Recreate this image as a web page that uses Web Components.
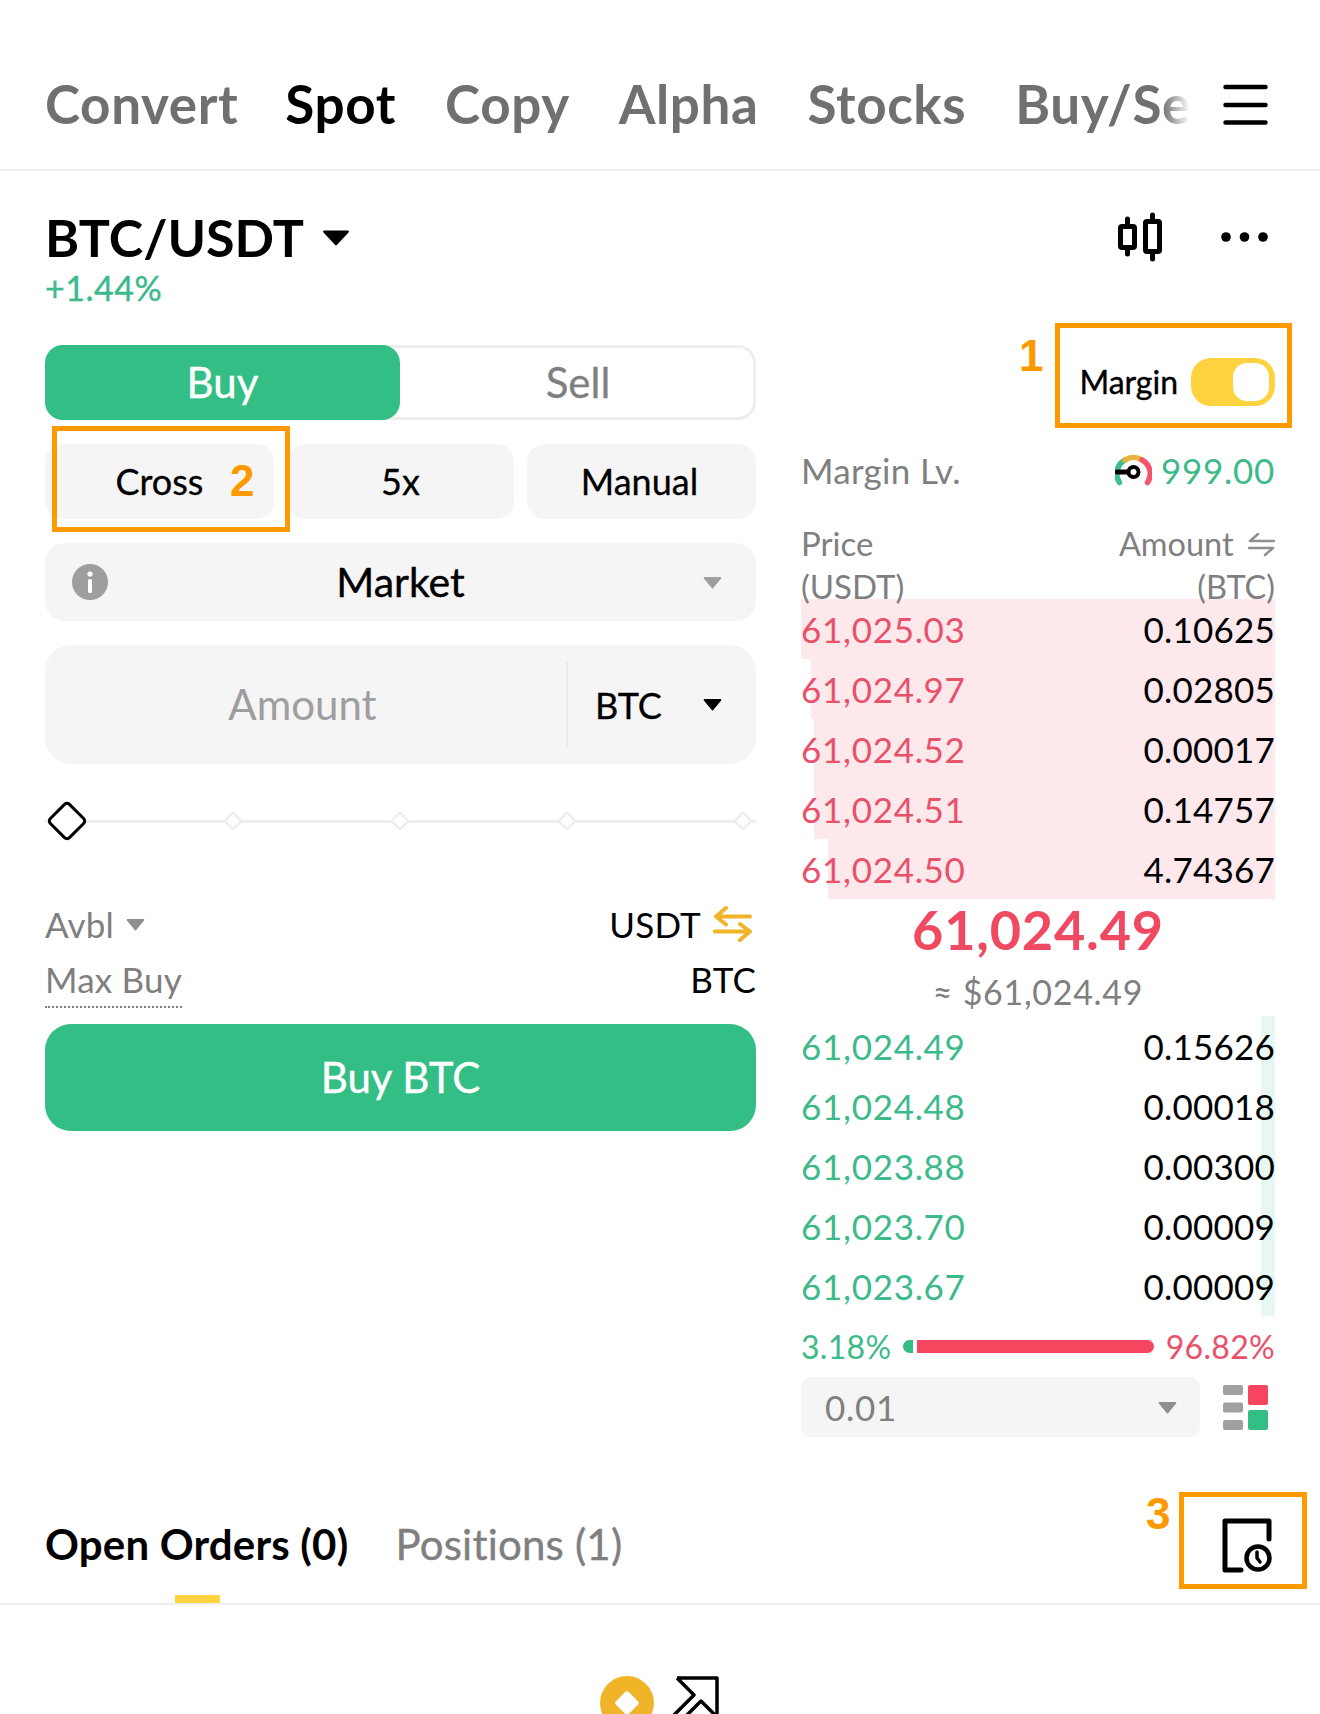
<!DOCTYPE html>
<html>
<head>
<meta charset="utf-8">
<title>Spot</title>
<style>
    html, body {
        margin: 0;
        background: #fff;
    }
    body {
        width: 1320px;
        height: 1714px;
        overflow: hidden;
        position: relative;
        font-family: Lato, "Noto Sans", sans-serif;
        color: #000;
    }
</style>
</head>
<body>
<top-tabs>
    <tab-link style="margin-right:-2px">Convert</tab-link>
    <tab-link active>Spot</tab-link>
    <tab-link>Copy</tab-link>
    <tab-link>Alpha</tab-link>
    <tab-link>Stocks</tab-link>
    <tab-link>Buy/Sell</tab-link>
</top-tabs>
<pair-header></pair-header>
<trade-panel>
    <order-form slot="left"></order-form>
    <order-book slot="right"></order-book>
</trade-panel>
<order-tabs></order-tabs>
<promo-icons></promo-icons>

<note-box num="1" style="left:1055px;top:323px;width:237px;height:105px" numx="-41" numy="3"></note-box>
<note-box num="2" style="left:52px;top:426px;width:238px;height:106px" numx="173" numy="25"></note-box>
<note-box num="3" style="left:1179px;top:1492px;width:128px;height:97px" numx="-38" numy="-8"></note-box>

<script>
// shared caret used in a few places
const caret = (color, w, h) => `<svg width="${w}" height="${h}" viewBox="0 0 20 12" preserveAspectRatio="none"><path d="M1.5 1h17a.8.8 0 0 1 .6 1.3l-8.5 9a.8.8 0 0 1-1.2 0l-8.5-9A.8.8 0 0 1 1.5 1z" fill="${color}"/></svg>`;

// TOP TABS
const topTabsTemplate = document.createElement('template');
topTabsTemplate.innerHTML = `
    <style>
        :host {
            display: flex;
            align-items: center;
            box-sizing: border-box;
            height: 171px;
            padding: 39px 52px 0 45px;
            border-bottom: 2px solid #eeeeee;
        }
        .scroll {
            flex: 1;
            display: flex;
            gap: 49px;
            overflow: hidden;
            white-space: nowrap;
            -webkit-mask-image: linear-gradient(to right, #000 1118px, transparent 1145px);
            mask-image: linear-gradient(to right, #000 1118px, transparent 1145px);
        }
        svg { flex: none; margin: 2px 0 0 33px; display: block; }
    </style>
    <div class="scroll"><slot></slot></div>
    <svg width="45" height="44" viewBox="0 0 45 44"><path d="M2.500 4h40M2.500 22h40M2.500 39.500h40" stroke="#000" stroke-width="4.500" stroke-linecap="round"/></svg>
`;
class TopTabs extends HTMLElement {
    constructor() {
        super();
        this.attachShadow({ mode: 'open' }).appendChild(topTabsTemplate.content.cloneNode(true));
    }
}
customElements.define('top-tabs', TopTabs);

const tabLinkTemplate = document.createElement('template');
tabLinkTemplate.innerHTML = `
    <style>
        :host {
            display: block;
            flex: none;
            font-size: 53px;
            letter-spacing: 0.6px;
            line-height: 62px;
            font-weight: 700;
            color: #707070;
        }
        :host([active]) { color: #000; }
    </style>
    <slot></slot>
`;
class TabLink extends HTMLElement {
    constructor() {
        super();
        this.attachShadow({ mode: 'open' }).appendChild(tabLinkTemplate.content.cloneNode(true));
    }
}
customElements.define('tab-link', TabLink);

// PAIR HEADER
const pairHeaderTemplate = document.createElement('template');
pairHeaderTemplate.innerHTML = `
    <style>
        :host {
            display: flex;
            justify-content: space-between;
            height: 174px;
            padding: 0 52px 0 45px;
            box-sizing: border-box;
        }
        .name { display: flex; align-items: center; gap: 18px; height: 60px; margin-top: 36px;
            font-size: 52px; font-weight: 700; line-height: 60px; }
        .chg { font-size: 34px; letter-spacing: 0.5px; line-height: 40px; color: #3dba8a; margin-top: 1px; -webkit-text-stroke: 0.4px #3dba8a; }
        .icons { display: flex; align-items: center; gap: 58px; height: 60px; margin-top: 36px; }
        svg { display: block; }
    </style>
    <div>
        <div class="name"><span>BTC/USDT</span>${caret('#000', 28, 17)}</div>
        <div class="chg">+1.44%</div>
    </div>
    <div class="icons">
        <svg width="46" height="50" viewBox="0 0 46 50" fill="none" stroke="#000" stroke-width="5" stroke-linecap="round" stroke-linejoin="round">
            <rect x="3.500" y="14.500" width="14" height="21" rx="1.500"/>
            <path d="M10.500 7v7.500M10.500 35.500V42"/>
            <rect x="28.500" y="9.500" width="14" height="30" rx="1.500"/>
            <path d="M35.500 3v6.500M35.500 39.500V47"/>
        </svg>
        <svg width="47" height="10" viewBox="0 0 47 10" fill="#000"><circle cx="5" cy="5" r="4.800"/><circle cx="23.500" cy="5" r="4.800"/><circle cx="42" cy="5" r="4.800"/></svg>
    </div>
`;
class PairHeader extends HTMLElement {
    constructor() {
        super();
        this.attachShadow({ mode: 'open' }).appendChild(pairHeaderTemplate.content.cloneNode(true));
    }
}
customElements.define('pair-header', PairHeader);

// MAIN TWO COLUMNS
const tradePanelTemplate = document.createElement('template');
tradePanelTemplate.innerHTML = `
    <style>
        :host {
            display: grid;
            grid-template-columns: 711px 474px;
            column-gap: 45px;
            padding-left: 45px;
            height: 1139px;
        }
    </style>
    <slot name="left"></slot>
    <slot name="right"></slot>
`;
class TradePanel extends HTMLElement {
    constructor() {
        super();
        this.attachShadow({ mode: 'open' }).appendChild(tradePanelTemplate.content.cloneNode(true));
    }
}
customElements.define('trade-panel', TradePanel);

// ORDER FORM
const orderFormTemplate = document.createElement('template');
orderFormTemplate.innerHTML = `
    <style>
        :host { display: flex; flex-direction: column; }
        .side {
            display: grid;
            grid-template-columns: 355px 1fr;
            height: 75px;
            border-radius: 18px;
            box-shadow: inset 0 0 0 3px #eeeeee;
            font-size: 42px;
            line-height: 75px;
            text-align: center;
            color: #7f7f7f;
        }
        .side b { font-weight: 400; background: #32be85; color: #fff; border-radius: 18px; -webkit-text-stroke: 0.4px #fff; }
        .side span { -webkit-text-stroke: 0.3px #7f7f7f; }
        .pills {
            display: grid;
            grid-template-columns: 229px 227px 229px;
            column-gap: 13px;
            margin-top: 24px;
        }
        .pill {
            height: 75px;
            line-height: 75px;
            background: #f5f5f5;
            border-radius: 18px;
            text-align: center;
            font-size: 36px;
            -webkit-text-stroke: 0.3px #000;
        }
        .pill:last-child { box-sizing: border-box; padding-right: 4px; }
        .market {
            position: relative;
            display: flex;
            align-items: center;
            justify-content: center;
            height: 78px;
            margin-top: 24px;
            background: #f5f5f5;
            border-radius: 20px;
            font-size: 41px;
            line-height: 76px;
            -webkit-text-stroke: 0.4px #000;
        }
        .market .info { position: absolute; left: 27px; top: 21px; }
        .market .arrow { position: absolute; right: 34px; top: 33px; display: flex; }
        .amount {
            display: flex;
            height: 119px;
            margin-top: 24px;
            background: #f5f5f5;
            border-radius: 26px;
            align-items: center;
        }
        .amount .ph {
            box-sizing: border-box;
            width: 523px;
            height: 85px;
            padding-right: 6px;
            line-height: 85px;
            text-align: center;
            border-right: 2px solid #ebebeb;
            font-size: 42px;
            color: #9e9e9e;
        }
        .amount .unit {
            flex: 1;
            display: flex;
            align-items: center;
            justify-content: space-between;
            padding: 0 34px 0 27px;
            font-size: 36px;
            -webkit-text-stroke: 0.3px #000;
        }
        .slider {
            display: flex;
            align-items: center;
            height: 40px;
            margin-top: 37px;
            background: linear-gradient(#eeeeee, #eeeeee) center / 100% 3px no-repeat;
        }
        .slider svg { display: block; flex: none; }
        .line {
            display: flex;
            justify-content: space-between;
            align-items: center;
            font-size: 35px;
            letter-spacing: 0.2px;
            color: #000;
        }
        .line .lab { color: #7f7f7f; display: flex; align-items: center; gap: 12px; }
        .line .val { display: flex; align-items: center; gap: 12px; }
        .line .val svg { margin-right: 3px; }
        .avbl { margin-top: 63px; height: 40px; }
        .maxbuy { margin-top: 15px; height: 40px; }
        .maxbuy .lab { border-bottom: 2px dotted #7f7f7f; padding-bottom: 6px; margin-top: 8px; }
        .buy {
            height: 107px;
            line-height: 107px;
            margin-top: 25px;
            background: #32be85;
            border-radius: 26px;
            text-align: center;
            color: #fff;
            font-size: 42px;
            -webkit-text-stroke: 0.4px #fff;
        }
    </style>
    <div class="side"><b>Buy</b><span>Sell</span></div>
    <div class="pills">
        <div class="pill">Cross</div>
        <div class="pill">5x</div>
        <div class="pill">Manual</div>
    </div>
    <div class="market">
        <svg class="info" width="36" height="36" viewBox="0 0 36 36"><circle cx="18" cy="18" r="18" fill="#9e9e9e"/><rect x="16" y="15" width="4" height="14" rx="1.500" fill="#fff"/><circle cx="18" cy="10" r="2.600" fill="#fff"/></svg>
        <span>Market</span>
        <span class="arrow">${caret('#9e9e9e', 19, 13)}</span>
    </div>
    <div class="amount">
        <div class="ph">Amount</div>
        <div class="unit"><span>BTC</span>${caret('#000', 19, 13)}</div>
    </div>
    <div class="slider" id="slider"></div>
    <div class="line avbl">
        <span class="lab">Avbl ${caret('#8f8f8f', 19, 13)}</span>
        <span class="val">USDT
            <svg width="40" height="36" viewBox="0 0 40 36" fill="none" stroke="#f0b429" stroke-width="4" stroke-linecap="round" stroke-linejoin="round"><path d="M13 2 3 10.500l10 8M3 10.500h34M27 18l10 7.500-10 8.500M2 25.500h35"/></svg>
        </span>
    </div>
    <div class="line maxbuy"><span class="lab">Max Buy</span><span>BTC</span></div>
    <div class="buy">Buy BTC</div>
`;
class OrderForm extends HTMLElement {
    constructor() {
        super();
        const shadow = this.attachShadow({ mode: 'open' });
        shadow.appendChild(orderFormTemplate.content.cloneNode(true));
        const big = `<svg width="40" height="40" viewBox="0 0 40 40" style="margin-left:2px"><rect x="6.500" y="6.500" width="27" height="27" rx="3.500" transform="rotate(45 20 20)" fill="#fff" stroke="#000" stroke-width="3"/></svg>`;
        // the last step of the slider is a bit longer than the others
        const small = (gap) => `<svg width="22" height="22" viewBox="0 0 22 22" style="margin-left:${gap}px"><rect x="5" y="5" width="12" height="12" rx="2" transform="rotate(45 11 11)" fill="#fff" stroke="#eeeeee" stroke-width="2.500"/></svg>`;
        shadow.getElementById('slider').innerHTML = big + small(135) + small(145) + small(145) + small(154);
    }
}
customElements.define('order-form', OrderForm);

// ORDER BOOK
const orderBookTemplate = document.createElement('template');
orderBookTemplate.innerHTML = `
    <style>
        :host { display: block; font-size: 35px; letter-spacing: 0.7px; }
        .margin {
            display: flex;
            align-items: center;
            justify-content: flex-end;
            height: 73px;
            padding-bottom: 2px;
            gap: 13px;
            font-size: 32px;
            letter-spacing: 0;
            -webkit-text-stroke: 0.4px #000;
        }
        .toggle { position: relative; width: 84px; height: 48px; border-radius: 20px; background: #ffd23f; }
        .toggle i { position: absolute; right: 6px; top: 5px; width: 36px; height: 38px; border-radius: 14px; background: #fff; }
        .lv { display: flex; justify-content: space-between; align-items: center; height: 42px; margin-top: 29px; color: #7f7f7f; }
        .lv > span:first-child { letter-spacing: 0.3px; }
        .lv .v { display: flex; align-items: center; gap: 9px; color: #3dba8a; }
        .head {
            display: grid;
            grid-template-columns: 1fr 1fr;
            margin-top: 31px;
            height: 77px;
            line-height: 43px;
            color: #7f7f7f;
            font-size: 33px;
            letter-spacing: 0;
        }
        .head div:last-child { text-align: right; font-size: 32.500px; }
        .head svg { vertical-align: -1px; margin-left: 6px; }
        .last { text-align: center; font-size: 54px; letter-spacing: 0.8px; font-weight: 700; line-height: 62px; height: 62px; color: #ef4a62; }
        .usd { text-align: center; font-size: 34px; line-height: 42px; height: 45px; color: #7f7f7f; margin-top: 10px; }
        .ratio {
            display: flex;
            align-items: center;
            justify-content: space-between;
            height: 38px;
            margin-top: 11px;
            font-size: 32px;
            letter-spacing: 0.3px;
        }
        .ratio .g { color: #3dba8a; }
        .ratio .r { color: #e9506a; }
        .ratio .bar { display: flex; width: 251px; height: 13px; gap: 4px; }
        .ratio .bar i:first-child { width: 10px; background: #32be85; border-radius: 7px 0 0 7px; }
        .ratio .bar i:last-child { flex: 1; background: #f5455f; border-radius: 0 7px 7px 0; }
        .tick { display: flex; align-items: center; justify-content: space-between; margin-top: 12px; }
        .sel {
            display: flex;
            align-items: center;
            justify-content: space-between;
            box-sizing: border-box;
            width: 399px;
            height: 60px;
            padding: 0 23px 0 24px;
            background: #f5f5f5;
            border-radius: 10px;
            color: #7f7f7f;
        }
        .tick svg { display: block; }
        .tick > svg { margin-right: 7px; }
    </style>
    <div class="margin"><span>Margin</span><div class="toggle"><i></i></div></div>
    <div class="lv">
        <span>Margin Lv.</span>
        <span class="v">
            <svg width="37" height="32" viewBox="0 0 37 32" fill="none" stroke-width="5.500" stroke-linecap="round">
                <path d="M4.500 28.500A15.500 15.500 0 0 1 10 6" stroke="#3fbd8c"/>
                <path d="M10 6A15.500 15.500 0 0 1 27 6" stroke="#ecb33c"/>
                <path d="M27 6A15.500 15.500 0 0 1 32.500 28.500" stroke="#f5556c"/>
                <path d="M2 18h16" stroke="#000" stroke-width="5"/>
                <circle cx="18.500" cy="18" r="5" fill="#fff" stroke="#000" stroke-width="4"/>
            </svg>
            999.00
        </span>
    </div>
    <div class="head">
        <div>Price<br>(USDT)</div>
        <div>Amount <svg width="27" height="25" viewBox="0 0 27 25" fill="none" stroke="#8f8f8f" stroke-width="2.500" stroke-linecap="round" stroke-linejoin="round"><path d="M10 2 2 9h24M17 23l8-7H1"/></svg><br>(BTC)</div>
    </div>
    <book-row side="ask" depth="0" amount="0.10625">61,025.03</book-row>
    <book-row side="ask" depth="10" amount="0.02805">61,024.97</book-row>
    <book-row side="ask" depth="13" amount="0.00017">61,024.52</book-row>
    <book-row side="ask" depth="13" amount="0.14757">61,024.51</book-row>
    <book-row side="ask" depth="27" amount="4.74367">61,024.50</book-row>
    <div class="last">61,024.49</div>
    <div class="usd">≈ $61,024.49</div>
    <book-row side="bid" depth="460" amount="0.15626">61,024.49</book-row>
    <book-row side="bid" depth="460" amount="0.00018">61,024.48</book-row>
    <book-row side="bid" depth="460" amount="0.00300">61,023.88</book-row>
    <book-row side="bid" depth="460" amount="0.00009">61,023.70</book-row>
    <book-row side="bid" depth="460" amount="0.00009">61,023.67</book-row>
    <div class="ratio">
        <span class="g">3.18%</span>
        <div class="bar"><i></i><i></i></div>
        <span class="r">96.82%</span>
    </div>
    <div class="tick">
        <div class="sel"><span>0.01</span>${caret('#8f8f8f', 19, 13)}</div>
        <svg width="45" height="45" viewBox="0 0 45 45">
            <rect x="0" y="0" width="20" height="10" rx="2" fill="#a0a0a0"/>
            <rect x="0" y="17.500" width="20" height="10" rx="2" fill="#a0a0a0"/>
            <rect x="0" y="35" width="20" height="10" rx="2" fill="#a0a0a0"/>
            <rect x="25" y="0" width="20" height="20" rx="2" fill="#f5455f"/>
            <rect x="25" y="25" width="20" height="20" rx="2" fill="#32be85"/>
        </svg>
    </div>
`;
class OrderBook extends HTMLElement {
    constructor() {
        super();
        this.attachShadow({ mode: 'open' }).appendChild(orderBookTemplate.content.cloneNode(true));
    }
}
customElements.define('order-book', OrderBook);

const bookRowTemplate = document.createElement('template');
bookRowTemplate.innerHTML = `
    <style>
        :host {
            display: flex;
            justify-content: space-between;
            align-items: center;
            height: 60px;
            background-repeat: no-repeat;
        }
        :host([side="ask"]) { color: #e9506a; }
        :host([side="bid"]) { color: #3dba8a; }
        .amt { color: #000; letter-spacing: 0.2px; }
    </style>
    <slot></slot><span class="amt"></span>
`;
class BookRow extends HTMLElement {
    constructor() {
        super();
        this.attachShadow({ mode: 'open' }).appendChild(bookRowTemplate.content.cloneNode(true));
    }
    connectedCallback() {
        this.shadowRoot.querySelector('.amt').textContent = this.getAttribute('amount');
        // depth is the empty part on the left of the row, in px
        const color = this.getAttribute('side') === 'ask' ? '#fde8ec' : '#e6f8f1';
        const depth = this.getAttribute('depth');
        this.style.background = `linear-gradient(to right, transparent ${depth}px, ${color} ${depth}px)`;
    }
}
customElements.define('book-row', BookRow);

// ORDER TABS
const orderTabsTemplate = document.createElement('template');
orderTabsTemplate.innerHTML = `
    <style>
        :host {
            display: flex;
            align-items: center;
            gap: 47px;
            box-sizing: border-box;
            height: 121px;
            padding: 0 48px 0 45px;
            border-bottom: 2px solid #eeeeee;
            font-size: 42px;
            letter-spacing: 0.2px;
            position: relative;
        }
        b { font-weight: 700; position: relative; }
        .off { color: #7f7f7f; -webkit-text-stroke: 0.4px #7f7f7f; }
        b::after {
            content: "";
            position: absolute;
            left: 130px;
            bottom: -34px;
            width: 45px;
            height: 8px;
            background: #ffd23f;
        }
        svg { position: absolute; right: 48px; top: 34px; display: block; }
    </style>
    <b>Open Orders (0)</b>
    <span class="off">Positions (1)</span>
    <svg width="50" height="55" viewBox="0 0 50 55" fill="none" stroke="#000" stroke-width="5" stroke-linejoin="round" stroke-linecap="round">
        <path d="M47 21V3H3v49h16"/>
        <circle cx="36" cy="40" r="11.500" stroke-width="4.500"/>
        <path d="M35 34v6l3 4" stroke-width="3.500"/>
    </svg>
`;
class OrderTabs extends HTMLElement {
    constructor() {
        super();
        this.attachShadow({ mode: 'open' }).appendChild(orderTabsTemplate.content.cloneNode(true));
    }
}
customElements.define('order-tabs', OrderTabs);

// BOTTOM ICONS, cut off by the end of the page
const promoIconsTemplate = document.createElement('template');
promoIconsTemplate.innerHTML = `
    <style>
        :host { display: flex; gap: 19px; padding: 71px 0 0 600px; }
        svg { display: block; flex: none; }
    </style>
    <svg width="54" height="54" viewBox="0 0 54 54"><circle cx="27" cy="27" r="27" fill="#f0b429"/><rect x="18" y="18" width="18" height="18" rx="2.500" transform="rotate(45 27 27)" fill="#fff"/></svg>
    <svg width="50" height="54" viewBox="0 0 50 54" fill="none" stroke="#000" stroke-width="3.500" stroke-linejoin="round">
        <path d="M4 2h40v50M4 2l17 17L0 40"/>
        <path d="M8 45l20-20 20 20"/>
    </svg>
`;
class PromoIcons extends HTMLElement {
    constructor() {
        super();
        this.attachShadow({ mode: 'open' }).appendChild(promoIconsTemplate.content.cloneNode(true));
    }
}
customElements.define('promo-icons', PromoIcons);

// ORANGE ANNOTATIONS OVER THE PAGE
const noteBoxTemplate = document.createElement('template');
noteBoxTemplate.innerHTML = `
    <style>
        :host {
            position: absolute;
            box-sizing: border-box;
            border: 5px solid #ff9900;
        }
        span {
            position: absolute;
            font: 700 44px/50px "Liberation Sans", Arial, sans-serif;
            color: #ff9900;
        }
    </style>
    <span></span>
`;
class NoteBox extends HTMLElement {
    constructor() {
        super();
        this.attachShadow({ mode: 'open' }).appendChild(noteBoxTemplate.content.cloneNode(true));
    }
    connectedCallback() {
        const num = this.shadowRoot.querySelector('span');
        num.textContent = this.getAttribute('num');
        num.style.left = this.getAttribute('numx') + 'px';
        num.style.top = this.getAttribute('numy') + 'px';
    }
}
customElements.define('note-box', NoteBox);
</script>
</body>
</html>
